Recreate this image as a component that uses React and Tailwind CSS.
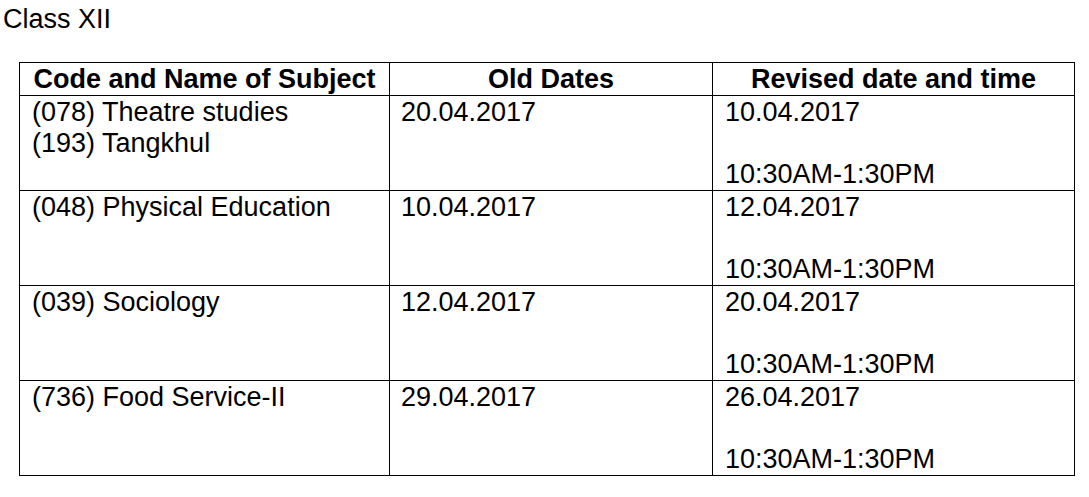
const rows = [
    { subject: ['(078) Theatre studies', '(193) Tangkhul'], old: '20.04.2017', revised: '10.04.2017' },
    { subject: ['(048) Physical Education'], old: '10.04.2017', revised: '12.04.2017' },
    { subject: ['(039) Sociology'], old: '12.04.2017', revised: '20.04.2017' },
    { subject: ['(736) Food Service-II'], old: '29.04.2017', revised: '26.04.2017' },
];

export default function App() {
    return (
        <div className="min-h-[497px] w-[1089px] bg-white text-black font-['Liberation_Sans',Arial,sans-serif] text-[27px] leading-[31px]">
            <p className="pl-[3px] pt-[4px]">Class XII</p>

            <table className="ml-[19px] mt-[27px] w-[1055px] table-fixed border-collapse">
                <colgroup>
                    <col className="w-[370px]" />
                    <col className="w-[323px]" />
                    <col className="w-[362px]" />
                </colgroup>
                <thead>
                    <tr className="h-[33px]">
                        <th className="border border-black p-0 pt-px align-top font-bold">Code and Name of Subject</th>
                        <th className="border border-black p-0 pt-px align-top font-bold">Old Dates</th>
                        <th className="border border-black p-0 pt-px align-top font-bold">Revised date and time</th>
                    </tr>
                </thead>
                <tbody>
                    {rows.map((row) => (
                        <tr key={row.old} className="h-[95px]">
                            <td className="border border-black px-3 pt-px pb-0 align-top">
                                {row.subject.map((s) => (
                                    <div key={s}>{s}</div>
                                ))}
                            </td>
                            <td className="border border-black pl-[11px] pt-px pb-0 align-top">{row.old}</td>
                            <td className="border border-black px-3 pt-px pb-0 align-top">
                                <div>{row.revised}</div>
                                <div>&nbsp;</div>
                                <div>10:30AM-1:30PM</div>
                            </td>
                        </tr>
                    ))}
                </tbody>
            </table>
        </div>
    );
}
